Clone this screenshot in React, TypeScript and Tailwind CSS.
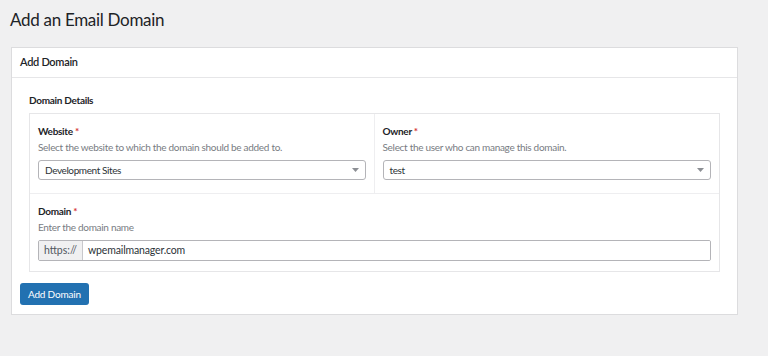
const font = { fontFamily: 'Lato, "Open Sans", Arial, sans-serif' };

function Caret() {
  return (
    <svg width="7" height="4" viewBox="0 0 7 4" className="shrink-0">
      <path d="M0 0h7L3.5 4z" fill="#8c8f94" />
    </svg>
  );
}

function Field({
  label,
  help,
  children,
}: {
  label: string;
  help: string;
  children: React.ReactNode;
}) {
  return (
    <div className="flex flex-col">
      <div className="text-[10px] font-bold text-[#1d2327] leading-[14px] tracking-[-0.3px]">
        {label} <span className="text-[#d63638]">*</span>
      </div>
      <div className="text-[10px] text-[#787c82] leading-[14px] mt-[2px] tracking-[-0.3px]">{help}</div>
      <div className="mt-[6px]">{children}</div>
    </div>
  );
}

function Select({ value }: { value: string }) {
  return (
    <div className="h-[20px] flex items-center justify-between border border-[#b4b4b8] rounded-[3px] bg-white pl-[6px] pr-[6px]">
      <span className="text-[10px] text-[#2c3338] tracking-[-0.4px]">{value}</span>
      <Caret />
    </div>
  );
}

export default function App() {
  return (
    <div className="w-[768px] h-[356px] bg-[#f0f0f1] overflow-hidden" style={font}>
      <h1 className="pl-[10px] pt-[6px] text-[17px] font-normal text-[#1d2327] leading-[28px] tracking-[-0.3px]">
        Add an Email Domain
      </h1>

      <div className="ml-[11px] mt-[13px] w-[727px] bg-white border border-[#dcdcde]">
        <div className="h-[30px] flex items-center px-[8px] border-b border-[#e6e6e8] text-[11px] font-semibold text-[#1d2327] tracking-[-0.3px]">
          Add Domain
        </div>

        <div className="pl-[17px] pr-[17px] pt-[15px] pb-[9px]">
          <div className="text-[10px] font-bold text-[#1d2327] leading-[14px] tracking-[-0.3px]">
            Domain Details
          </div>

          <div className="mt-[6px] border border-[#e6e6e8]">
            <div className="grid grid-cols-2 border-b border-[#eeeef0]">
              <div className="pl-[8px] pr-[8px] pt-[10px] pb-[13px] border-r border-[#eeeef0]">
                <Field label="Website" help="Select the website to which the domain should be added to.">
                  <Select value="Development Sites" />
                </Field>
              </div>
              <div className="pl-[8px] pr-[8px] pt-[10px] pb-[13px]">
                <Field label="Owner" help="Select the user who can manage this domain.">
                  <Select value="test" />
                </Field>
              </div>
            </div>
            <div className="pl-[8px] pr-[8px] pt-[10px] pb-[10px]">
              <Field label="Domain" help="Enter the domain name">
                <div className="h-[21px] flex border border-[#b4b4b8] rounded-[2px] overflow-hidden">
                  <div className="w-[44px] flex items-center justify-center bg-[#f0f0f1] border-r border-[#c8c8cc] text-[10.5px] text-[#50575e]">
                    https://
                  </div>
                  <div className="flex-1 flex items-center pl-[5px] text-[10.5px] text-[#2c3338] bg-white tracking-[-0.15px]">
                    wpemailmanager.com
                  </div>
                </div>
              </Field>
            </div>
          </div>

          <button className="mt-[11px] -ml-[9px] h-[22px] px-[8px] bg-[#2271b1] text-white text-[10px] rounded-[3px] leading-none tracking-[-0.2px]">
            Add Domain
          </button>
        </div>
      </div>
    </div>
  );
}
